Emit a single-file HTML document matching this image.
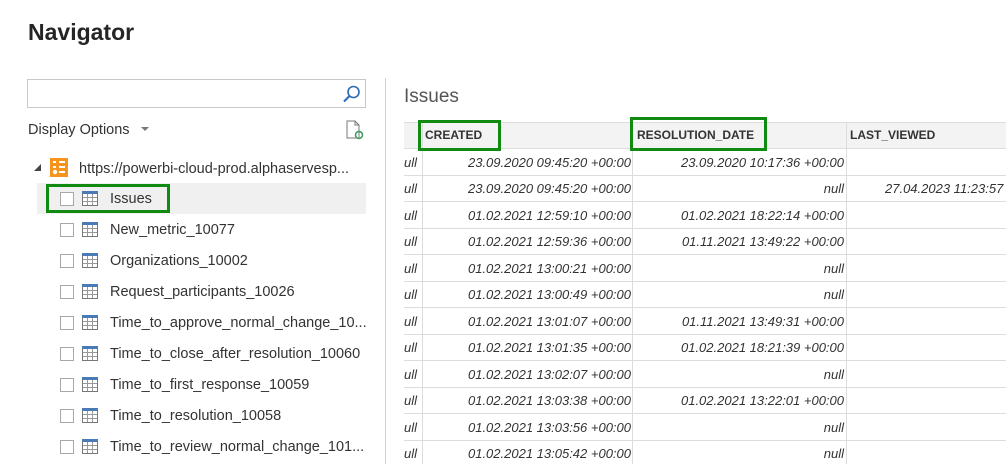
<!DOCTYPE html>
<html><head><style>
*{margin:0;padding:0;box-sizing:border-box}
body{width:1006px;height:464px;overflow:hidden;background:#fff;font-family:"Liberation Sans",sans-serif;color:#333;position:relative}
.a{position:absolute;white-space:nowrap}
.tr{position:absolute;left:37px;width:329px;height:30px}
.cb{position:absolute;left:23px;top:8px;width:14px;height:14px;border:1px solid #a8a8a8;background:#fff}
.ti{position:absolute;left:45px;top:7px}
.tt{position:absolute;left:73px;top:7px;font-size:14.5px;color:#333}
.hd{position:absolute;top:122px;height:27px;background:#f3f3f3;border-top:1px solid #ddd;border-bottom:1px solid #ddd}
.row{position:absolute;left:404px;width:602px;height:27px;border-bottom:1px solid #dcdcdc;overflow:hidden}
.c{position:absolute;top:6px;font-size:13px;font-style:italic;color:#333;text-align:right;white-space:nowrap}
.vl{position:absolute;top:122px;height:342px;width:1px;background:#dcdcdc}
.hx{position:absolute;top:128px;font-size:12px;font-weight:bold;color:#333}
</style></head><body>
<div class="a" style="left:28px;top:19px;font-size:23px;font-weight:bold;color:#252525">Navigator</div>
<div class="a" style="left:27px;top:79px;width:339px;height:29px;border:1px solid #c8c8c8"></div>
<svg class="a" style="left:342px;top:84px" width="20" height="20" viewBox="0 0 20 20"><circle cx="11.5" cy="8" r="5.5" fill="none" stroke="#2b6cb0" stroke-width="1.6"/><line x1="7.5" y1="12" x2="2" y2="17.5" stroke="#2b6cb0" stroke-width="2"/></svg>
<div class="a" style="left:28px;top:122px;font-size:14.5px;color:#333">Display Options</div>
<svg class="a" style="left:141px;top:127px" width="8" height="5"><polygon points="0,0 8,0 4,4" fill="#777"/></svg>
<svg class="a" style="left:345px;top:120px" width="20" height="20" viewBox="0 0 20 20"><path d="M2 1h8l4 4v13H2z" fill="#fff" stroke="#777"/><path d="M10 1v4h4" fill="none" stroke="#777"/><circle cx="14" cy="15" r="3.5" fill="none" stroke="#3a9a5a" stroke-width="1.5"/></svg>
<svg class="a" style="left:34px;top:164px" width="7" height="7"><polygon points="7,0 7,7 0,7" fill="#444"/></svg>
<svg class="a" style="left:50px;top:158px" width="18" height="19"><rect width="18" height="19" fill="#f7941d"/><rect x="9" y="3" width="6" height="2" fill="#fff"/><rect x="9" y="8" width="6" height="2" fill="#fff"/><rect x="3" y="3" width="3" height="2" fill="#fff"/><rect x="3" y="8" width="3" height="2" fill="#fff"/><circle cx="5" cy="14" r="2.2" fill="#fff"/><rect x="9" y="13" width="6" height="2" fill="#fff"/></svg>
<div class="a" style="left:79px;top:161px;font-size:14.5px;color:#333">https://powerbi-cloud-prod.alphaservesp...</div>
<div class="a" style="left:37px;top:183px;width:329px;height:31px;background:#f0f0f0"></div>
<div class="a" style="left:46px;top:184px;width:124px;height:29px;border:3px solid #118a11"></div>

<div class="tr" style="top:184px"><div class="cb"></div><svg class="ti" width="16" height="15"><rect x=".5" y=".5" width="15" height="14" fill="#fff" stroke="#777"/><rect x="0" y="0" width="16" height="3" fill="#4a7bb7"/><path d="M5.5 3v11M10.5 3v11M1 6.5h14M1 10.5h14" stroke="#999"/></svg><div class="tt">Issues</div></div>
<div class="tr" style="top:215px"><div class="cb"></div><svg class="ti" width="16" height="15"><rect x=".5" y=".5" width="15" height="14" fill="#fff" stroke="#777"/><rect width="16" height="3" fill="#4a7bb7"/><path d="M5.5 3v11M10.5 3v11M1 6.5h14M1 10.5h14" stroke="#999"/></svg><div class="tt">New_metric_10077</div></div>
<div class="tr" style="top:246px"><div class="cb"></div><svg class="ti" width="16" height="15"><rect x=".5" y=".5" width="15" height="14" fill="#fff" stroke="#777"/><rect width="16" height="3" fill="#4a7bb7"/><path d="M5.5 3v11M10.5 3v11M1 6.5h14M1 10.5h14" stroke="#999"/></svg><div class="tt">Organizations_10002</div></div>
<div class="tr" style="top:277px"><div class="cb"></div><svg class="ti" width="16" height="15"><rect x=".5" y=".5" width="15" height="14" fill="#fff" stroke="#777"/><rect width="16" height="3" fill="#4a7bb7"/><path d="M5.5 3v11M10.5 3v11M1 6.5h14M1 10.5h14" stroke="#999"/></svg><div class="tt">Request_participants_10026</div></div>
<div class="tr" style="top:308px"><div class="cb"></div><svg class="ti" width="16" height="15"><rect x=".5" y=".5" width="15" height="14" fill="#fff" stroke="#777"/><rect width="16" height="3" fill="#4a7bb7"/><path d="M5.5 3v11M10.5 3v11M1 6.5h14M1 10.5h14" stroke="#999"/></svg><div class="tt">Time_to_approve_normal_change_10...</div></div>
<div class="tr" style="top:339px"><div class="cb"></div><svg class="ti" width="16" height="15"><rect x=".5" y=".5" width="15" height="14" fill="#fff" stroke="#777"/><rect width="16" height="3" fill="#4a7bb7"/><path d="M5.5 3v11M10.5 3v11M1 6.5h14M1 10.5h14" stroke="#999"/></svg><div class="tt">Time_to_close_after_resolution_10060</div></div>
<div class="tr" style="top:370px"><div class="cb"></div><svg class="ti" width="16" height="15"><rect x=".5" y=".5" width="15" height="14" fill="#fff" stroke="#777"/><rect width="16" height="3" fill="#4a7bb7"/><path d="M5.5 3v11M10.5 3v11M1 6.5h14M1 10.5h14" stroke="#999"/></svg><div class="tt">Time_to_first_response_10059</div></div>
<div class="tr" style="top:401px"><div class="cb"></div><svg class="ti" width="16" height="15"><rect x=".5" y=".5" width="15" height="14" fill="#fff" stroke="#777"/><rect width="16" height="3" fill="#4a7bb7"/><path d="M5.5 3v11M10.5 3v11M1 6.5h14M1 10.5h14" stroke="#999"/></svg><div class="tt">Time_to_resolution_10058</div></div>
<div class="tr" style="top:432px"><div class="cb"></div><svg class="ti" width="16" height="15"><rect x=".5" y=".5" width="15" height="14" fill="#fff" stroke="#777"/><rect width="16" height="3" fill="#4a7bb7"/><path d="M5.5 3v11M10.5 3v11M1 6.5h14M1 10.5h14" stroke="#999"/></svg><div class="tt">Time_to_review_normal_change_101...</div></div>

<div class="a" style="left:385px;top:78px;width:1px;height:386px;background:#d0d0d0"></div>
<div class="a" style="left:404px;top:86px;font-size:19px;color:#555">Issues</div>

<div class="hd" style="left:404px;width:602px"></div>
<div class="hx" style="left:425px">CREATED</div>
<div class="hx" style="left:637px">RESOLUTION_DATE</div>
<div class="hx" style="left:850px">LAST_VIEWED</div>

<div class="row" style="top:149px"><div class="c" style="left:0">ull</div><div class="c" style="right:375px">23.09.2020 09:45:20 +00:00</div><div class="c" style="right:162px">23.09.2020 10:17:36 +00:00</div></div>
<div class="row" style="top:175px"><div class="c" style="left:0">ull</div><div class="c" style="right:375px">23.09.2020 09:45:20 +00:00</div><div class="c" style="right:162px">null</div><div class="c" style="left:481px">27.04.2023 11:23:57</div></div>
<div class="row" style="top:202px"><div class="c" style="left:0">ull</div><div class="c" style="right:375px">01.02.2021 12:59:10 +00:00</div><div class="c" style="right:162px">01.02.2021 18:22:14 +00:00</div></div>
<div class="row" style="top:228px"><div class="c" style="left:0">ull</div><div class="c" style="right:375px">01.02.2021 12:59:36 +00:00</div><div class="c" style="right:162px">01.11.2021 13:49:22 +00:00</div></div>
<div class="row" style="top:255px"><div class="c" style="left:0">ull</div><div class="c" style="right:375px">01.02.2021 13:00:21 +00:00</div><div class="c" style="right:162px">null</div></div>
<div class="row" style="top:281px"><div class="c" style="left:0">ull</div><div class="c" style="right:375px">01.02.2021 13:00:49 +00:00</div><div class="c" style="right:162px">null</div></div>
<div class="row" style="top:308px"><div class="c" style="left:0">ull</div><div class="c" style="right:375px">01.02.2021 13:01:07 +00:00</div><div class="c" style="right:162px">01.11.2021 13:49:31 +00:00</div></div>
<div class="row" style="top:334px"><div class="c" style="left:0">ull</div><div class="c" style="right:375px">01.02.2021 13:01:35 +00:00</div><div class="c" style="right:162px">01.02.2021 18:21:39 +00:00</div></div>
<div class="row" style="top:361px"><div class="c" style="left:0">ull</div><div class="c" style="right:375px">01.02.2021 13:02:07 +00:00</div><div class="c" style="right:162px">null</div></div>
<div class="row" style="top:387px"><div class="c" style="left:0">ull</div><div class="c" style="right:375px">01.02.2021 13:03:38 +00:00</div><div class="c" style="right:162px">01.02.2021 13:22:01 +00:00</div></div>
<div class="row" style="top:414px"><div class="c" style="left:0">ull</div><div class="c" style="right:375px">01.02.2021 13:03:56 +00:00</div><div class="c" style="right:162px">null</div></div>
<div class="row" style="top:440px;border-bottom:none"><div class="c" style="left:0">ull</div><div class="c" style="right:375px">01.02.2021 13:05:42 +00:00</div><div class="c" style="right:162px">null</div></div>

<div class="vl" style="left:422px"></div>
<div class="vl" style="left:632px"></div>
<div class="vl" style="left:846px"></div>

<div class="a" style="left:418px;top:120px;width:83px;height:31px;border:3px solid #118a11"></div>
<div class="a" style="left:630px;top:117px;width:137px;height:34px;border:3px solid #118a11"></div>
</body></html>
